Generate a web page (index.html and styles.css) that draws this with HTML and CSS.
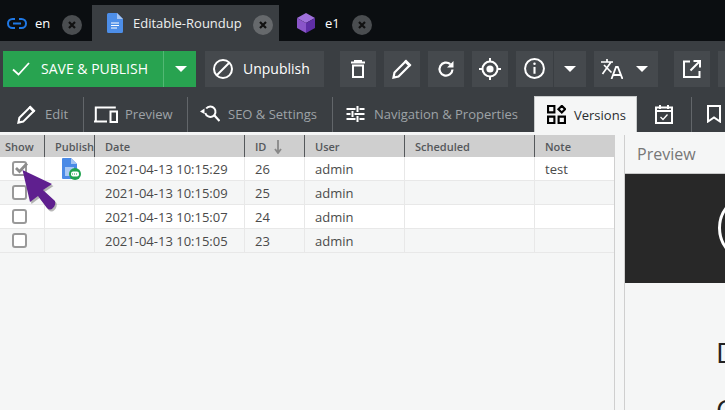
FILE: index.html
```html
<!DOCTYPE html>
<html lang="en">
<head>
<meta charset="utf-8">
<title>Versions</title>
<link rel="stylesheet" href="styles.css">
</head>
<body>
<div class="app">
  <nav class="tabbar">
    <div class="tab tab-en">
      <svg width="20" height="11" viewBox="0 0 20 11"><path d="M8 1H5.500a4.500 4.500 0 0 0 0 9H8M12 1h2.500a4.500 4.500 0 0 1 0 9H12M6 5.500h8" fill="none" stroke="#1f78e6" stroke-width="2"/></svg>
      <span class="tab-label">en</span>
      <span class="close"><svg width="10" height="10" viewBox="0 0 10 10"><path d="M2 2l6 6M8 2l-6 6" stroke="#111" stroke-width="2.200"/></svg></span>
    </div>
    <div class="tab tab-active">
      <svg width="16" height="20" viewBox="0 0 16 20"><path d="M1.500 0H10l6 6v12.500a1.500 1.500 0 0 1-1.500 1.500h-13A1.500 1.500 0 0 1 0 18.500v-17A1.500 1.500 0 0 1 1.500 0z" fill="#4d8ee8"/><path d="M10 0l6 6h-6z" fill="#a4c4f2"/><path d="M4 10h8M4 12.500h8M4 15h6" stroke="#fff"/></svg>
      <span class="tab-label">Editable-Roundup</span>
      <span class="close close-light"><svg width="10" height="10" viewBox="0 0 10 10"><path d="M2 2l6 6M8 2l-6 6" stroke="#111" stroke-width="2.200"/></svg></span>
    </div>
    <div class="tab tab-e1">
      <svg width="18" height="20" viewBox="0 0 18 20"><path d="M9 0l9 5-9 5-9-5z" fill="#a071dc"/><path d="M0 5l9 5v10l-9-5z" fill="#8a55c9"/><path d="M18 5l-9 5v10l9-5z" fill="#5f2ea6"/></svg>
      <span class="tab-label">e1</span>
      <span class="close"><svg width="10" height="10" viewBox="0 0 10 10"><path d="M2 2l6 6M8 2l-6 6" stroke="#111" stroke-width="2.200"/></svg></span>
    </div>
  </nav>

  <div class="toolbar">
    <div class="save">
      <span class="save-main">
        <svg width="18" height="14" viewBox="0 0 18 14"><path d="M1 7.500l5.500 5L17 1" fill="none" stroke="#fff" stroke-width="1.800"/></svg>
        <span>SAVE &amp; PUBLISH</span>
      </span>
      <span class="save-caret"><i class="caret"></i></span>
    </div>
    <button class="btn btn-unpublish">
      <svg width="20" height="20" viewBox="0 0 20 20"><circle cx="10" cy="10" r="9" fill="none" stroke="#fff" stroke-width="2"/><path d="M4 16L16 4" stroke="#fff" stroke-width="2"/></svg>
      <span>Unpublish</span>
    </button>
    <button class="btn btn-icon">
      <svg width="14" height="18" viewBox="0 0 14 18"><path d="M0 2.500h14M4 2V.8h6V2" fill="none" stroke="#fff" stroke-width="2"/><path d="M2 5.500h10V17H2z" fill="none" stroke="#fff" stroke-width="2"/></svg>
    </button>
    <button class="btn btn-icon">
      <svg width="20" height="20" viewBox="0 0 20 20"><path d="M1.500 18.500l1-5L13.500 2.500l4 4L6.500 17.500z" fill="none" stroke="#fff" stroke-width="2.200"/><path d="M14 .5l5.500 5.500-2 2-5.500-5.500z" fill="#fff"/></svg>
    </button>
    <button class="btn btn-icon">
      <svg width="18" height="18" viewBox="0 0 18 18"><path d="M15.500 9.500a6.500 6.500 0 1 1-2.200-5.300" fill="none" stroke="#fff" stroke-width="2.200"/><path d="M16.500 1v6.500H10z" fill="#fff"/></svg>
    </button>
    <button class="btn btn-icon">
      <svg width="22" height="22" viewBox="0 0 22 22"><circle cx="11" cy="11" r="7.500" fill="none" stroke="#fff" stroke-width="2"/><circle cx="11" cy="11" r="3.600" fill="#fff"/><path d="M11 0v3.500M11 18.500V22M0 11h3.500M18.500 11H22" stroke="#fff" stroke-width="2"/></svg>
    </button>
    <div class="split">
      <button class="btn btn-info">
        <svg width="21" height="21" viewBox="0 0 20 20"><circle cx="10" cy="10" r="9" fill="none" stroke="#fff" stroke-width="1.900"/><path d="M10 8.500V15" stroke="#fff" stroke-width="2"/><circle cx="10" cy="5.500" r="1.200" fill="#fff"/></svg>
      </button>
      <button class="btn btn-info-caret"><i class="caret"></i></button>
    </div>
    <button class="btn btn-translate">
      <svg width="22" height="20" viewBox="0 0 22 20"><path d="M0 3h12M6 0v3M1.500 15l8.500-12M3 6l7.500 7.500" fill="none" stroke="#fff" stroke-width="1.700"/><path d="M10.500 20l4.500-12h1.800L21.500 20M12.500 16h7" fill="none" stroke="#fff" stroke-width="1.800"/></svg>
      <i class="caret"></i>
    </button>
    <button class="btn btn-icon btn-open">
      <svg width="18" height="18" viewBox="0 0 18 18"><path d="M7 1.500H1v15.500h15.500V11M10.500 1h6.500v6.500M17 1L7.500 10.500" fill="none" stroke="#fff" stroke-width="2"/></svg>
    </button>
    <button class="btn btn-clip"></button>
  </div>

  <div class="editbar">
    <div class="etab etab-edit sep">
      <svg width="19" height="19" viewBox="0 0 20 20"><path d="M1.500 18.500l1-5L13.500 2.500l4 4L6.500 17.500z" fill="none" stroke="#fff" stroke-width="2.200"/><path d="M14 .5l5.500 5.500-2 2-5.500-5.500z" fill="#fff"/></svg>
      <span>Edit</span>
    </div>
    <div class="etab etab-preview sep">
      <svg width="24" height="17" viewBox="0 0 24 17"><path d="M1.800 15V1.500h20M0 15.500h13" fill="none" stroke="#fff" stroke-width="2"/><path d="M16.500 5.500h6.500v10.500h-6.500z" fill="none" stroke="#fff" stroke-width="2"/></svg>
      <span>Preview</span>
    </div>
    <div class="etab etab-seo sep">
      <svg width="20" height="18" viewBox="0 0 20 18"><path d="M6.200 3.500A5.200 5.200 0 1 1 5.300 8" fill="none" stroke="#fff" stroke-width="2"/><path d="M14.500 10.500l5 5.500" stroke="#fff" stroke-width="2.200"/><path d="M0 6.500l4.500-3v5.500z" fill="#fff"/></svg>
      <span>SEO &amp; Settings</span>
    </div>
    <div class="etab etab-nav">
      <svg width="19" height="16" viewBox="0 0 18 16"><path d="M0 3h9M13 3h5M0 8h4M8 8h10M0 13h9M13 13h5" stroke="#fff" stroke-width="2"/><path d="M11 0v6M6 5v6M11 10v6" stroke="#fff" stroke-width="2"/></svg>
      <span>Navigation &amp; Properties</span>
    </div>
    <div class="etab etab-versions">
      <svg width="19" height="19" viewBox="0 0 18 18"><path d="M1 1h6v6H1zM1 11h6v6H1zM11 11h6v6h-6zM14 .8L17.200 4 14 7.200 10.800 4z" fill="none" stroke="#000" stroke-width="2"/></svg>
      <span>Versions</span>
    </div>
    <div class="etab etab-cal sep">
      <svg width="18" height="20" viewBox="0 0 18 20"><path d="M1 3.500h16V19H1zM1 7h16M5 1v4M13 1v4" fill="none" stroke="#fff" stroke-width="2"/><path d="M5.500 13l2.500 2.500 4.500-5" fill="none" stroke="#fff" stroke-width="1.300"/></svg>
    </div>
    <div class="etab etab-book">
      <svg width="14" height="18" viewBox="0 0 14 18"><path d="M1 1h12v15.500l-6-4-6 4z" fill="none" stroke="#fff" stroke-width="2"/></svg>
    </div>
  </div>

  <main class="panes">
    <section class="grid-pane">
      <table class="grid">
        <colgroup>
          <col class="c-show"><col class="c-pub"><col class="c-date"><col class="c-id"><col class="c-user"><col class="c-sched"><col class="c-note">
        </colgroup>
        <thead>
          <tr>
            <th>Show</th><th>Publish</th><th>Date</th>
            <th>ID <svg class="sort" width="8" height="14" viewBox="0 0 8 14"><path d="M4 0v12M1 9l3 4 3-4" fill="none" stroke="#888" stroke-width="1.800"/></svg></th>
            <th>User</th><th>Scheduled</th><th>Note</th>
          </tr>
        </thead>
        <tbody>
          <tr>
            <td><span class="check check-on"><svg width="17" height="14" viewBox="0 0 17 14"><path d="M2 6l3.500 3.500L13 1.500" fill="none" stroke="#8c8c8c" stroke-width="2.800"/></svg></span></td>
            <td class="pub">
              <svg class="pub-icon" width="21" height="22" viewBox="0 0 21 22"><path d="M3 0h8l6 6v14a1 1 0 0 1-1 1H3a1 1 0 0 1-1-1V1a1 1 0 0 1 1-1z" fill="#4a8ae6"/><path d="M11 0l6 6h-6z" fill="#a4c4f2"/><rect x="5" y="9" width="9" height="9" fill="#a9c8f3"/><circle cx="15" cy="16" r="6" fill="#1fa34f"/><rect x="11" y="13.500" width="8" height="5" rx="2" fill="#fff"/><path d="M12 16h6" stroke="#1fa34f" stroke-dasharray="1 1"/></svg>
            </td>
            <td>2021-04-13 10:15:29</td><td>26</td><td>admin</td><td></td><td>test</td>
          </tr>
          <tr><td><span class="check"></span></td><td></td><td>2021-04-13 10:15:09</td><td>25</td><td>admin</td><td></td><td></td></tr>
          <tr><td><span class="check"></span></td><td></td><td>2021-04-13 10:15:07</td><td>24</td><td>admin</td><td></td><td></td></tr>
          <tr><td><span class="check"></span></td><td></td><td>2021-04-13 10:15:05</td><td>23</td><td>admin</td><td></td><td></td></tr>
        </tbody>
      </table>
      <svg class="pointer" width="38" height="46" viewBox="0 0 38 46"><path d="M1.500 2L31 16l-9 6 12 11q1 4-2 7t-6 0L17 28l-8 6z" fill="#000" opacity=".28" transform="translate(1.500 2)"/><path d="M1.500 2L31 16l-9 6 12 11q1 4-2 7t-6 0L17 28l-8 6z" fill="#5f1f8f"/></svg>
    </section>
    <section class="preview-pane">
      <header class="preview-title">Preview</header>
      <div class="preview-hero"><span class="hero-ring"></span></div>
      <div class="preview-body">
        <span class="b-d">D</span>
        <span class="b-c">C</span>
      </div>
    </section>
  </main>
</div>
</body>
</html>
```

FILE: styles.css
```css
* { box-sizing: border-box; }
html, body { margin: 0; padding: 0; }
body {
  width: 725px; height: 410px; overflow: hidden;
  font-family: "Open Sans", "Noto Sans", sans-serif;
  background: #f5f6f6;
}
svg { display: block; flex: none; }
button { font: inherit; border: 0; padding: 0; color: inherit; }
.app { width: 725px; height: 410px; overflow: hidden; display: flex; flex-direction: column; }

.tabbar { height: 41px; background: #0b0e11; display: flex; align-items: flex-end; flex: none; }
.tab { height: 36px; display: flex; align-items: center; color: #fff; font-size: 13px; flex: none; }
.tab-en { width: 92px; padding-left: 7px; }
.tab-en .tab-label { margin-left: 8px; }
.tab-en .close { margin-left: 12px; }
.tab-active { width: 187px; padding-left: 15px; background: #3a3e42; color: #eef0f0; }
.tab-active .tab-label { margin-left: 10px; }
.tab-active .close { margin-left: auto; margin-right: 6px; }
.tab-e1 { padding-left: 18px; }
.tab-e1 .tab-label { margin-left: 10px; }
.tab-e1 .close { margin-left: 12px; }
.close { width: 20px; height: 20px; margin-top: 4px; border-radius: 50%; background: #4a4d50; display: flex; align-items: center; justify-content: center; flex: none; }
.close-light { background: #66696c; }

.toolbar { height: 55px; background: #3a3e42; display: flex; align-items: center; padding-left: 3px; flex: none; }
.save { width: 193px; height: 36px; background: #28a350; display: flex; color: #fff; font-size: 14px; flex: none; }
.save-main { width: 160px; display: flex; align-items: center; padding-left: 9px; gap: 11px; flex: none; }
.save-caret { flex: 1; border-left: 1px solid #52b873; display: flex; align-items: center; justify-content: center; padding-left: 1px; }
.caret { display: block; width: 0; height: 0; border-left: 6px solid transparent; border-right: 6px solid transparent; border-top: 6px solid #fff; flex: none; }
.btn { height: 36px; background: #45494d; color: #fff; display: flex; align-items: center; justify-content: center; flex: none; }
.btn-unpublish { width: 119px; margin-left: 9px; margin-right: 16px; font-size: 14px; gap: 10px; justify-content: flex-start; padding-left: 8px; }
.btn-icon { width: 36px; margin-right: 8px; }
.split { display: flex; gap: 1px; margin-right: 8px; flex: none; }
.btn-info { width: 37px; }
.btn-info-caret { width: 32px; }
.btn-translate { width: 64px; gap: 13px; margin-right: 16px; justify-content: flex-start; padding-left: 7px; }
.btn-open { margin-right: 8px; }
.btn-clip { flex: 1 0 7px; }

.editbar { height: 36px; background: #3a3e42; display: flex; align-items: stretch; flex: none; font-size: 13px; color: #9ea3a7; }
.etab { display: flex; align-items: center; position: relative; flex: none; }
.sep::after { content: ""; position: absolute; right: 0; top: 1px; bottom: 0; width: 1px; background: #62666a; }
.etab-edit { width: 84px; padding-left: 17px; gap: 9px; }
.etab-preview { width: 104px; padding-left: 10px; gap: 7px; }
.etab-seo { width: 145px; padding-left: 12px; gap: 8px; }
.etab-nav { width: 201px; padding-left: 13px; gap: 9px; }
.etab-versions { width: 103px; padding-left: 12px; gap: 8px; background: #f5f6f6; color: #2a2d30; border: 1px solid #c9cccc; border-bottom: 0; }
.etab-cal { width: 55px; padding-left: 18px; }
.etab-book { padding-left: 15px; }

.panes { flex: 1; display: flex; min-height: 0; padding-top: 3px; }
.grid-pane { width: 615px; flex: none; position: relative; border-right: 1px solid #cfcfcf; }
.grid { width: 614px; table-layout: fixed; border-collapse: separate; border-spacing: 0; font-size: 13px; color: #4a4a4a; }
.c-show { width: 45px; } .c-pub { width: 50px; } .c-date { width: 150px; } .c-id { width: 60px; }
.c-user { width: 100px; } .c-sched { width: 130px; } .c-note { width: 79px; }
.grid th { height: 22px; background: #cfcfcf; font-size: 11px; font-weight: 600; color: #55585b; text-align: left; padding: 0 0 0 10px; border-right: 1px solid #55585b; white-space: nowrap; overflow: hidden; }
.grid th:first-child { padding-left: 5px; }
.grid th:last-child { border-right: 0; }
.sort { display: inline-block; vertical-align: -3px; margin-left: 5px; }
.grid td { height: 24px; padding: 0 0 0 10px; border-right: 1px solid #e8e8e8; border-bottom: 1px solid #e8e8e8; background: #fff; white-space: nowrap; }
.grid td:last-child { border-right: 0; }
.grid tbody tr:nth-child(even) td { background: #f5f6f6; }
.grid td.pub { padding: 0 0 0 15px; }
.pub-icon { margin-top: 1px; }
.check { display: block; width: 15px; height: 15px; border: 2px solid #999; border-radius: 3px; background: #fff; margin-left: 2px; position: relative; }
.check svg { position: absolute; left: 0; top: -1px; }
.pointer { position: absolute; left: 21px; top: 33px; }

.preview-pane { flex: 1; margin-left: 9px; border-left: 1px solid #cfcfcf; min-width: 0; display: flex; flex-direction: column; }
.preview-title { height: 39px; padding-left: 12px; font-size: 16px; color: #777; display: flex; align-items: center; border-bottom: 1px solid #c8c8c8; flex: none; }
.preview-hero { height: 109px; background: #282828; overflow: hidden; position: relative; flex: none; }
.hero-ring { position: absolute; left: 93px; top: 19px; width: 70px; height: 70px; border-radius: 50%; border: 3px solid #fff; }
.preview-body { position: relative; flex: 1; }
.b-d, .b-c { position: absolute; left: 91px; font-size: 28px; line-height: 28px; color: #222; }
.b-d { top: 55px; } .b-c { top: 112px; }
```
